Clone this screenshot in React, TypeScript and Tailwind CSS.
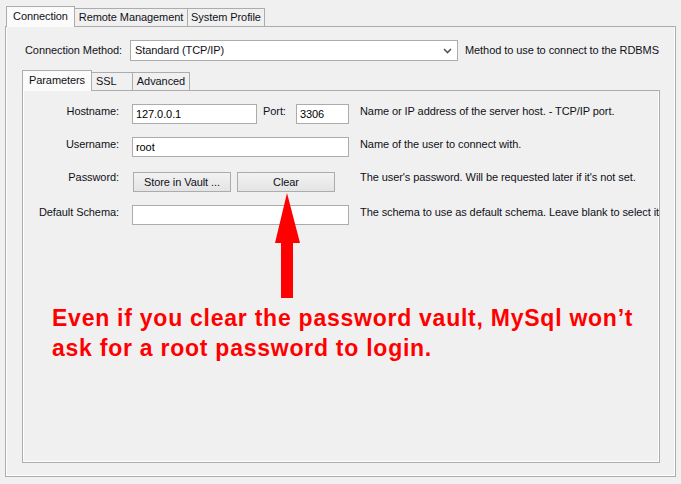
import type { ReactNode } from 'react'

const FIELD_BORDER = 'border border-[#acacac]'

function Tab({ label, active, className }: { label: string; active?: boolean; className: string }) {
  return (
    <div
      className={[
        'flex items-center border border-[#acacac]',
        active
          ? 'relative z-10 -mb-px h-[21px] border-b-0 bg-[#fbfbfb]'
          : 'h-[18px] border-b-0 bg-[#f0f0f0]',
        className,
      ].join(' ')}
    >
      {label}
    </div>
  )
}

function Row({
  label,
  children,
  desc,
  className = '',
  textTop = 'pt-0',
}: {
  label: string
  children: ReactNode
  desc: string
  className?: string
  textTop?: string
}) {
  return (
    <div className={'flex h-[20px] items-start ' + className}>
      <div className={`w-[96px] shrink-0 text-right leading-[15px] ${textTop}`}>{label}</div>
      <div className="ml-[13px] flex w-[217px] shrink-0 items-start">{children}</div>
      <div className={`ml-[11px] whitespace-nowrap leading-[15px] ${textTop}`}>{desc}</div>
    </div>
  )
}

function Input({ value, w }: { value: string; w: string }) {
  return (
    <div className={`flex h-[20px] items-center bg-white pl-[3px] text-black ${FIELD_BORDER} ${w}`}>
      {value}
    </div>
  )
}

function Button({ label, className }: { label: string; className: string }) {
  return (
    <div
      className={`flex h-[20px] items-center justify-center bg-linear-to-b from-[#f2f2f2] to-[#e4e4e4] ${FIELD_BORDER} ${className}`}
    >
      {label}
    </div>
  )
}

export default function App() {
  return (
    <div className="relative h-[484px] w-[681px] overflow-hidden bg-[#f0f0f0] font-['Liberation_Sans',Arial,sans-serif] text-[11px] tracking-[-0.08px] text-[#101018]">
      <div className="pl-[5px] pt-[6px]">
        {/* top level tabs */}
        <div className="flex items-end pl-px">
          <Tab label="Connection" active className="w-[69px] justify-center pb-px" />
          <Tab label="Remote Management" className="w-[113px] justify-center border-l-0" />
          <Tab label="System Profile" className="w-[77px] justify-center border-l-0" />
        </div>

        {/* outer panel */}
        <div className="h-[451px] w-[671px] border border-[#acacac] shadow-[inset_1px_0_0_#fff,inset_-1px_0_0_#fff,inset_0_-1px_0_#fff]">
          <div className="mt-[13px] flex h-[21px] items-center pl-[19px]">
            <div className="w-[105px] shrink-0">Connection Method:</div>
            <div className={`flex h-[21px] w-[328px] items-center justify-between bg-white pl-[4px] pr-[5px] ${FIELD_BORDER}`}>
              <span>Standard (TCP/IP)</span>
              <svg width="9" height="6" viewBox="0 0 9 6">
                <path d="M1 1 L4.5 4.5 L8 1" fill="none" stroke="#555" strokeWidth="1.6" />
              </svg>
            </div>
            <div className="ml-[7px] whitespace-nowrap">Method to use to connect to the RDBMS</div>
          </div>

          {/* inner tabs */}
          <div className="ml-[16px] mt-[9px] flex items-end">
            <Tab label="Parameters" active className="w-[70px] justify-center pb-px" />
            <Tab label="SSL" className="w-[41px] border-l-0 pl-[4px]" />
            <Tab label="Advanced" className="w-[57px] justify-center border-l-0" />
          </div>

          {/* inner panel */}
          <div className="ml-[16px] h-[373px] w-[638px] overflow-hidden border border-[#acacac] shadow-[inset_1px_0_0_#fff,inset_-1px_0_0_#fff,inset_0_-1px_0_#fff]">
            <div className="pt-[13px]">
              <Row label="Hostname:" desc="Name or IP address of the server host. - TCP/IP port.">
                <Input value="127.0.0.1" w="w-[125px]" />
                <div className="ml-[6px] w-[33px] leading-[15px]">Port:</div>
                <Input value="3306" w="w-[53px]" />
              </Row>
              <Row className="mt-[13px]" label="Username:" desc="Name of the user to connect with.">
                <Input value="root" w="w-[217px]" />
              </Row>
              <Row
                className="mt-[14px]"
                textTop="-mt-[1px]"
                label="Password:"
                desc="The user's password. Will be requested later if it's not set."
              >
                <Button label="Store in Vault ..." className="ml-px mt-px w-[98px]" />
                <Button label="Clear" className="ml-[6px] mt-px w-[98px]" />
              </Row>
              <Row
                className="mt-[14px]"
                label="Default Schema:"
                desc="The schema to use as default schema. Leave blank to select it"
              >
                <Input value="" w="w-[217px]" />
              </Row>
            </div>
          </div>
        </div>
      </div>

      {/* annotation */}
      <svg className="absolute left-0 top-0" width="681" height="484" viewBox="0 0 681 484">
        <polygon points="287,193 300,243 293,243 293,298 281,298 281,243 275,243" fill="#ff0000" />
      </svg>
      <div className="absolute left-[52px] top-[303px] text-[23px] font-bold leading-[30px] tracking-[0.75px] text-[#ff0000]">
        Even if you clear the password vault, MySql won’t
        <br />
        ask for a root password to login.
      </div>
    </div>
  )
}
